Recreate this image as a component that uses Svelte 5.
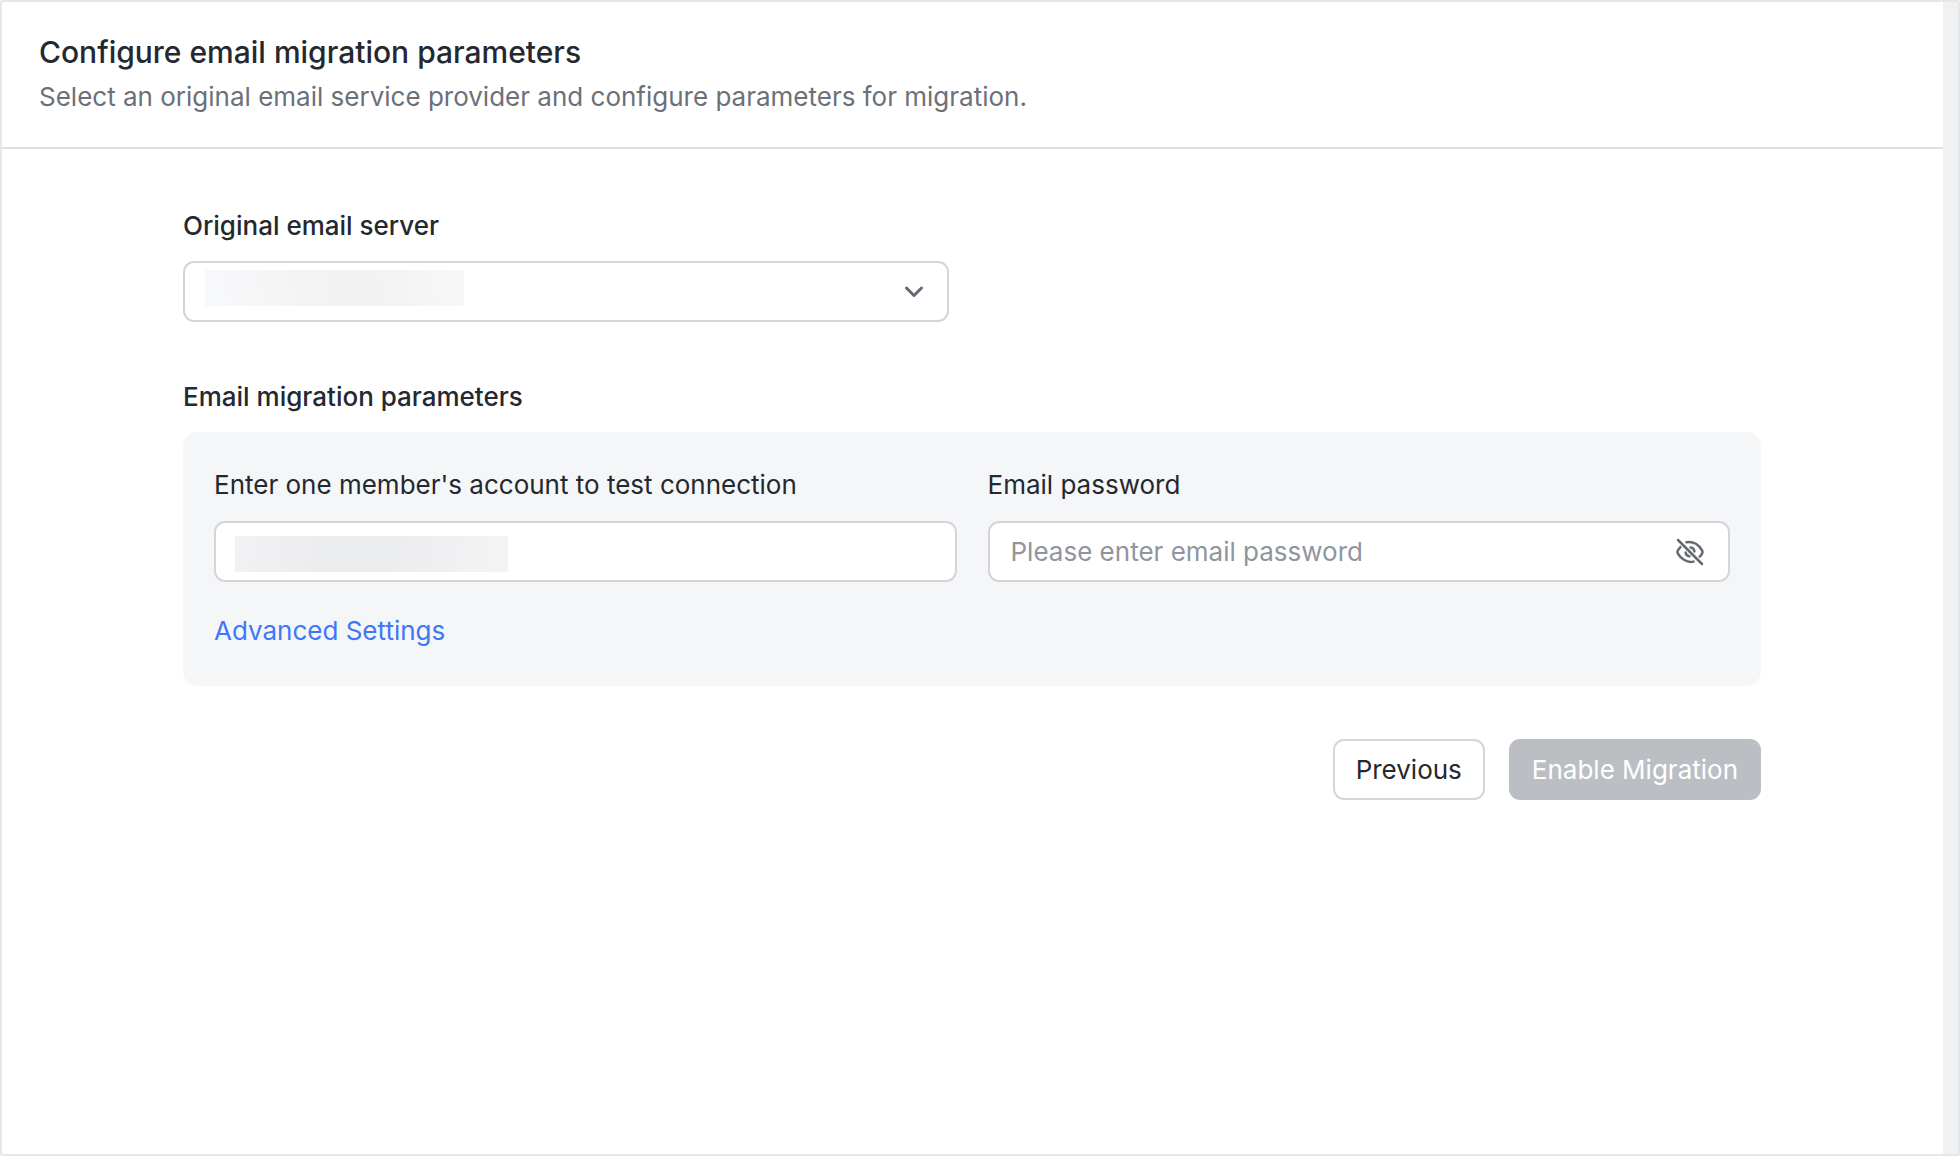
<script>
  let server = $state('');
  let account = $state('');
  let password = $state('');
  let revealed = $state(false);
</script>

<div class="page">
  <main>
    <header>
      <h1>Configure email migration parameters</h1>
      <p>Select an original email service provider and configure parameters for migration.</p>
    </header>

    <form onsubmit={(e) => e.preventDefault()}>
      <label class="title" for="server">Original email server</label>
      <div class="field server">
        <select id="server" bind:value={server}>
          <option value=""></option>
        </select>
        <span class="mask mask-server"></span>
        <svg class="chevron" viewBox="0 0 30 30" aria-hidden="true">
          <path d="M7.5 11 15 18.5l7.5-7.5" />
        </svg>
      </div>

      <h2 class="title">Email migration parameters</h2>
      <section class="panel">
        <div class="columns">
          <div class="column">
            <label for="account">Enter one member's account to test connection</label>
            <div class="field">
              <input id="account" type="text" bind:value={account} />
              <span class="mask mask-account"></span>
            </div>
          </div>
          <div class="column">
            <label for="password">Email password</label>
            <div class="field">
              <input
                id="password"
                type={revealed ? 'text' : 'password'}
                placeholder="Please enter email password"
                bind:value={password}
              />
              <button
                class="reveal"
                type="button"
                aria-label="Show password"
                onclick={() => (revealed = !revealed)}
              >
                <svg viewBox="0 0 30 30" aria-hidden="true">
                  <path d="M3 3 27 27" />
                  <path d="M11.5 5.2C18.5 3.8 24.3 8 27.2 13.6C27.7 14.6 27.7 15.4 27.2 16.3C26.5 17.6 25.7 18.7 24.7 19.7" />
                  <path d="M5.4 10.2C4.4 11.2 3.5 12.4 2.8 13.6C2.3 14.6 2.3 15.4 2.8 16.3C5.8 21.8 11.8 26 18.6 24.6" />
                  <path d="M15.6 10.6C17.7 10.9 19.2 12.4 19.4 14.4" />
                  <path d="M10.6 15.4C10.8 17.5 12.4 19.1 14.5 19.3" />
                </svg>
              </button>
            </div>
          </div>
        </div>
        <a href="#advanced">Advanced Settings</a>
      </section>

      <footer>
        <button class="btn" type="button">Previous</button>
        <button class="btn primary" type="submit" disabled>Enable Migration</button>
      </footer>
    </form>
  </main>
  <div class="gutter"></div>
</div>

<style>
  :global(body) {
    background: #f7f7f7;
  }
  .page {
    box-sizing: border-box;
    min-height: 100vh;
    display: flex;
    border: 2px solid #e6e7e8;
    border-radius: 3px;
    background: #fff;
    color: #24282f;
    font-family: Inter, 'Liberation Sans', sans-serif;
    font-size: 26px;
    line-height: 40px;
  }
  main {
    flex: 1;
    min-width: 0;
  }
  .gutter {
    width: 15px;
    background: #f0f1f3;
  }
  header {
    padding: 27px 37px 28px;
    border-bottom: 2px solid #dee0e3;
  }
  h1,
  h2,
  p {
    margin: 0;
  }
  h1 {
    font-size: 30px;
    line-height: 46px;
    font-weight: 500;
  }
  header p {
    color: #6b7079;
    line-height: 44px;
  }
  form {
    padding: 57px 182px 56px 181px;
  }
  .title {
    display: block;
    font-size: 26px;
    font-weight: 500;
    margin-bottom: 15px;
  }
  .field {
    position: relative;
    display: flex;
    align-items: center;
    box-sizing: border-box;
    height: 61px;
    border: 2px solid #d3d5d8;
    border-radius: 11px;
    background: #fff;
  }
  .server {
    width: 766px;
    max-width: 100%;
    margin-bottom: 55px;
  }
  select,
  input {
    flex: 1;
    min-width: 0;
    height: 100%;
    padding: 0 21px;
    border: 0;
    outline: 0;
    background: transparent;
    color: inherit;
    font: inherit;
    appearance: none;
  }
  input::placeholder {
    color: #8f959e;
    opacity: 1;
  }
  .mask {
    position: absolute;
    height: 36px;
    pointer-events: none;
  }
  .mask-server {
    left: 20px;
    top: 7px;
    width: 259px;
    background: linear-gradient(80deg, #f8f9fb, #f2f2f2 50%, #f2f2f2 65%, #f8f8f8);
  }
  .mask-account {
    left: 19px;
    top: 13px;
    width: 273px;
    background: linear-gradient(100deg, #f2f2f4, #ebecee 35%, #ecedef 60%, #f4f4f5);
  }
  svg {
    display: block;
    width: 30px;
    height: 30px;
    fill: none;
    stroke: #646a73;
    stroke-width: 2.5;
    stroke-linecap: round;
    stroke-linejoin: round;
  }
  .chevron {
    position: absolute;
    right: 18px;
    pointer-events: none;
    stroke-width: 3;
  }
  .reveal {
    margin: 0 23px 0 0;
    padding: 0;
    border: 0;
    background: none;
    cursor: pointer;
  }
  .panel {
    padding: 33px 31px 35px;
    border-radius: 15px;
    background: #f5f6f7;
  }
  .columns {
    display: flex;
    gap: 31px;
    margin-bottom: 29px;
  }
  .column {
    flex: 1;
    min-width: 0;
  }
  .column label {
    display: block;
    margin-bottom: 16px;
  }
  a {
    color: #4077fa;
    text-decoration: none;
  }
  footer {
    display: flex;
    justify-content: flex-end;
    gap: 24px;
    margin-top: 53px;
  }
  .btn {
    box-sizing: border-box;
    height: 61px;
    padding: 0 21px;
    border: 2px solid #d3d5d8;
    border-radius: 11px;
    background: #fff;
    color: inherit;
    font: inherit;
  }
  .primary {
    border-color: #bbbfc4;
    background: #bbbfc4;
    color: #fff;
  }
</style>
